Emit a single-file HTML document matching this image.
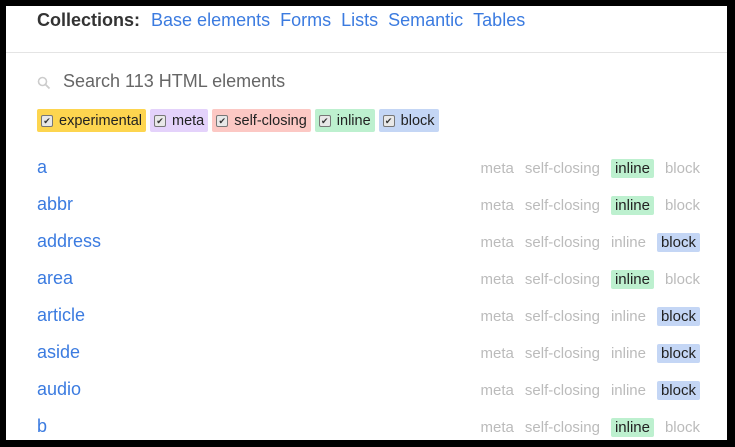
<!DOCTYPE html>
<html><head><meta charset="utf-8"><style>
html,body{margin:0;padding:0;}
body{width:735px;height:447px;background:#000;position:relative;overflow:hidden;font-family:"Liberation Sans",sans-serif;}
.box{position:absolute;left:6px;top:6px;width:721px;height:434px;background:#fff;overflow:hidden;}
.hdr{position:absolute;left:31px;top:4px;font-size:18px;white-space:nowrap;}
.hdr b{color:#333;margin-right:6px;}
.hdr a{color:#3b7be0;text-decoration:none;margin-right:10px;}
.hr{position:absolute;left:0;right:0;top:46px;height:1px;background:#e4e4e4;}
.search{position:absolute;left:57px;top:65px;font-size:18px;color:#666;}
.mag{position:absolute;left:31px;top:70px;}
.chips{position:absolute;left:31px;top:103px;display:flex;gap:4px;font-size:14.5px;}
.chip{padding:2px 4px 2px 4px;border-radius:2px;color:#222;display:flex;align-items:center;height:19px;}
.cb{width:10px;height:10px;border:1px solid #777;border-radius:2px;background:#e8e8e8;margin-right:6px;font-size:9px;line-height:10px;text-align:center;color:#333;}
.row{position:absolute;left:0;width:721px;height:30px;}
.row .n{position:absolute;left:31px;top:3px;font-size:18px;color:#3b7be0;}
.tags{position:absolute;right:27px;top:5px;display:flex;gap:11px;font-size:15px;color:#bbb;}
.tags span{padding:1px 4px;}
.tags .hi-i{background:#bdf0cf;color:#222;border-radius:2px;}
.tags .hi-b{background:#c4d6f5;color:#222;border-radius:2px;}
.tags .pl{padding:1px 0;}
</style></head><body>
<div class="box">
<div class="hdr"><b>Collections:</b> <a>Base elements</a><a>Forms</a><a>Lists</a><a>Semantic</a><a>Tables</a></div>
<div class="hr"></div>
<svg class="mag" width="14" height="14" viewBox="0 0 14 14"><circle cx="5.5" cy="5.5" r="4" fill="none" stroke="#ccc" stroke-width="1.6"/><line x1="8.5" y1="8.5" x2="12.5" y2="12.5" stroke="#ccc" stroke-width="1.8"/></svg>
<div class="search">Search 113 HTML elements</div>
<div class="chips">
<div class="chip" style="background:#fdd54f"><span class="cb">✔</span>experimental</div>
<div class="chip" style="background:#e4d2fb"><span class="cb">✔</span>meta</div>
<div class="chip" style="background:#fcc8c4"><span class="cb">✔</span>self-closing</div>
<div class="chip" style="background:#bdf0cf"><span class="cb">✔</span>inline</div>
<div class="chip" style="background:#c4d6f5"><span class="cb">✔</span>block</div>
</div>

<div class="row" style="top:148px"><div class="n">a</div><div class="tags"><span class="pl">meta</span><span class="pl">self-closing</span><span class="hi-i">inline</span><span class="pl">block</span></div></div>
<div class="row" style="top:185px"><div class="n">abbr</div><div class="tags"><span class="pl">meta</span><span class="pl">self-closing</span><span class="hi-i">inline</span><span class="pl">block</span></div></div>
<div class="row" style="top:222px"><div class="n">address</div><div class="tags"><span class="pl">meta</span><span class="pl">self-closing</span><span class="pl">inline</span><span class="hi-b">block</span></div></div>
<div class="row" style="top:259px"><div class="n">area</div><div class="tags"><span class="pl">meta</span><span class="pl">self-closing</span><span class="hi-i">inline</span><span class="pl">block</span></div></div>
<div class="row" style="top:296px"><div class="n">article</div><div class="tags"><span class="pl">meta</span><span class="pl">self-closing</span><span class="pl">inline</span><span class="hi-b">block</span></div></div>
<div class="row" style="top:333px"><div class="n">aside</div><div class="tags"><span class="pl">meta</span><span class="pl">self-closing</span><span class="pl">inline</span><span class="hi-b">block</span></div></div>
<div class="row" style="top:370px"><div class="n">audio</div><div class="tags"><span class="pl">meta</span><span class="pl">self-closing</span><span class="pl">inline</span><span class="hi-b">block</span></div></div>
<div class="row" style="top:407px"><div class="n">b</div><div class="tags"><span class="pl">meta</span><span class="pl">self-closing</span><span class="hi-i">inline</span><span class="pl">block</span></div></div>
</div>
</body></html>
